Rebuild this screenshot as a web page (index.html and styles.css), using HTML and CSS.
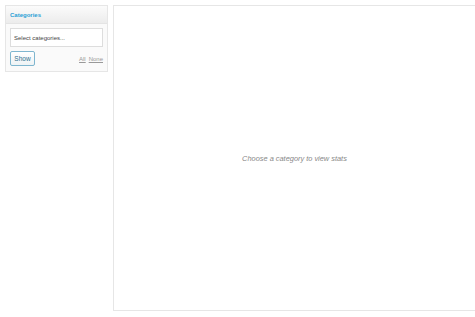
FILE: index.html
```html
<!DOCTYPE html>
<html lang="en">
<head>
    <meta charset="UTF-8">
    <meta name="viewport" content="width=device-width, initial-scale=1.0">
    <link rel="stylesheet" href="styles.css">
    <title>Category Stats</title>
</head>
<body>
    <div class="layout">
        <div class="sidebar">
            <div class="box">
                <div class="box-header">Categories</div>
                <div class="box-body">
                    <input class="cat-input" type="text" placeholder="Select categories...">
                    <div class="actions">
                        <button class="show-btn">Show</button>
                        <div class="links">
                            <a href="#">All</a>
                            <a href="#">None</a>
                        </div>
                    </div>
                </div>
            </div>
        </div>
        <div class="main">
            <p class="empty">Choose a category to view stats</p>
        </div>
    </div>
</body>
</html>
```

FILE: styles.css
```css
body {
    margin: 0;
    background-color: #fff;
    font-family: "Liberation Sans", Arial, sans-serif;
    font-size: 7px;
    color: #333;
}

.layout {
    display: flex;
    gap: 5px;
    padding: 5px 0 6px 5px;
    height: 317px;
    box-sizing: border-box;
}

.sidebar {
    width: 103px;
    flex-shrink: 0;
}

.box {
    border: 1px solid #e6e6e6;
    background-color: #fafafa;
}

.box-header {
    height: 17px;
    line-height: 18px;
    padding-left: 4px;
    font-size: 6px;
    font-weight: bold;
    color: #2a9fd6;
    background: linear-gradient(#fbfbfb, #ececec);
    border-bottom: 1px solid #e4e4e4;
}

.box-body {
    padding: 4px 4px 5px 4px;
}

.cat-input {
    display: block;
    width: 100%;
    height: 19px;
    box-sizing: border-box;
    border: 1px solid #ddd;
    background: #fff;
    padding: 0 3px;
    font-family: inherit;
    font-size: 6px;
    color: #333;
}

.cat-input::placeholder {
    color: #444;
}

.actions {
    display: flex;
    justify-content: space-between;
    align-items: center;
    margin-top: 4px;
}

.show-btn {
    width: 25px;
    height: 15px;
    padding: 0;
    border: 1px solid #7fb6cf;
    border-radius: 2px;
    background: linear-gradient(#ffffff, #eef3f5);
    color: #2d6f8f;
    font-family: inherit;
    font-size: 6.5px;
    cursor: pointer;
}

.links a {
    color: #999;
    font-size: 6px;
    margin-left: 1px;
}

.main {
    flex: 1;
    border: 1px solid #e6e6e6;
    border-right: none;
    display: flex;
    justify-content: center;
    align-items: center;
}

.empty {
    margin: 0;
    font-style: italic;
    color: #888;
    font-size: 7.4px;
    -webkit-font-smoothing: antialiased;
}
```
